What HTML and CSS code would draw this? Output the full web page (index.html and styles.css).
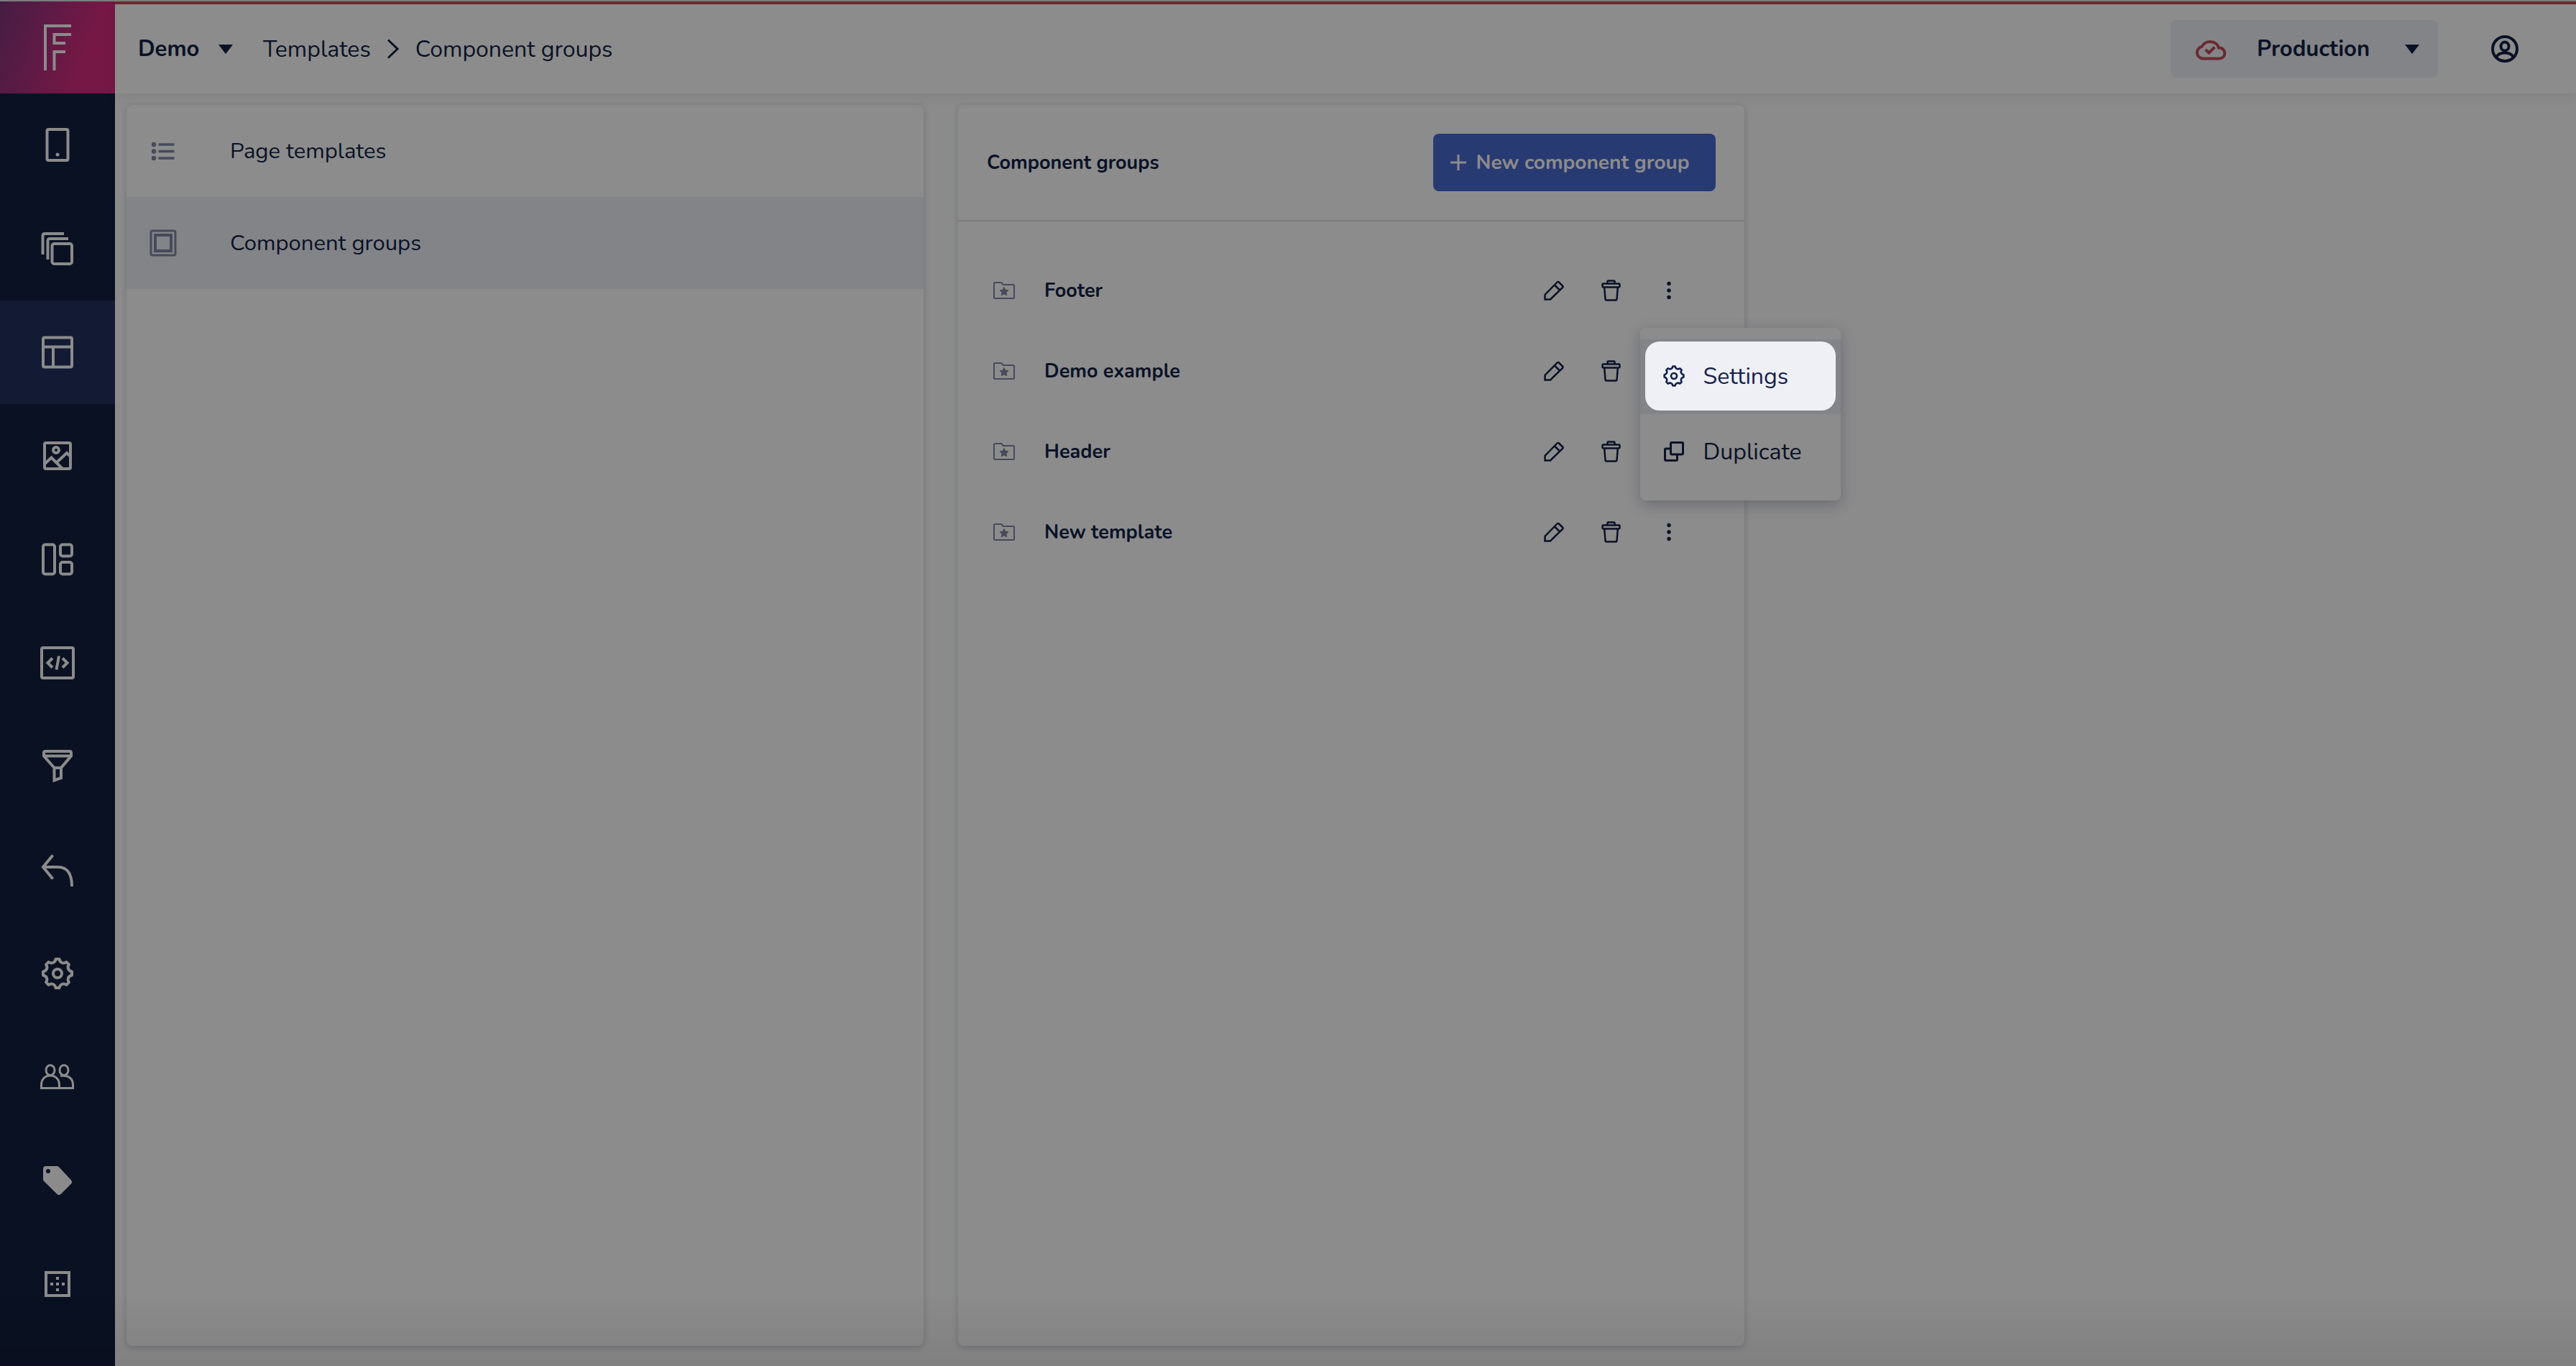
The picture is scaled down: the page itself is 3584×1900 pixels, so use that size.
FILE: index.html
```html
<!DOCTYPE html>
<html lang="en">
<head>
    <meta charset="UTF-8">
    <title>Component groups</title>
    <link rel="stylesheet" href="styles.css">
</head>
<body>
    <!-- Shared icons -->
    <svg class="sprite" aria-hidden="true">
        <symbol id="folder" viewBox="0 0 30 24">
            <path d="M2.5 1h8.5l3 3h13.500q1.500 0 1.500 1.500v16q0 1.500-1.500 1.500h-25q-1.500 0-1.500-1.500v-19q0-1.500 1.500-1.500z" fill="none" stroke="currentColor" stroke-width="2"/>
            <path d="M15 7.500l1.800 3.800 4.200.5-3.100 2.800.8 4.200-3.700-2.100-3.700 2.100.8-4.200-3.100-2.800 4.200-.5z" fill="currentColor"/>
        </symbol>
        <symbol id="pencil" viewBox="0 0 28 28">
            <path d="M1.500 26.500V20L18.500 2.500q1.200-1.200 2.400 0L26 7.500q1.200 1.200 0 2.400L9 26.500zM15 6.500l7 7" fill="none" stroke="currentColor" stroke-width="2.500"/>
        </symbol>
        <symbol id="trash" viewBox="0 0 27 30">
            <path d="M2.700 5.500h21.600q1.200 0 1.200 1.200v2.600q0 1.200-1.200 1.200H2.700q-1.200 0-1.200-1.200V6.700q0-1.200 1.200-1.200zM8.500 5V2.500q0-1 1-1h8q1 0 1 1V5M4.200 11l1.300 16q.1 1.500 1.500 1.500h13q1.400 0 1.500-1.500l1.300-16" fill="none" stroke="currentColor" stroke-width="2.500"/>
        </symbol>
        <symbol id="dots" viewBox="0 0 6 26">
            <g class="solid"><circle cx="3" cy="3.500" r="2.700"/><circle cx="3" cy="13" r="2.700"/><circle cx="3" cy="22.500" r="2.700"/></g>
        </symbol>
        <symbol id="gear" viewBox="-24 -24 48 48">
            <path d="M-2.500-20L2.500-20C3.500-15 8.100-13.100 12.400-15.900L15.900-12.400C13.100-8.100 15-3.500 20-2.500L20 2.500C15 3.500 13.100 8.100 15.900 12.400L12.400 15.900C8.100 13.100 3.500 15 2.500 20L-2.500 20C-3.500 15-8.100 13.100-12.400 15.900L-15.900 12.400C-13.100 8.100-15 3.500-20 2.500L-20-2.500C-15-3.500-13.100-8.100-15.900-12.400L-12.400-15.900C-8.100-13.100-3.500-15-2.500-20Z" fill="none" stroke="currentColor" stroke-width="4" stroke-linejoin="round"/>
            <circle r="6" fill="none" stroke="currentColor" stroke-width="4"/>
        </symbol>
    </svg>

    <aside class="sidebar">
        <a class="logo" href="#" aria-label="Home">
            <svg width="40" height="64" viewBox="0 0 40 64"><path d="M3 64V2h36M39 14H15.500v12H31M31 38H15.500v26"/></svg>
        </a>
        <nav class="nav">
            <a href="#" aria-label="App"><svg viewBox="0 0 48 48"><rect x="9.500" y="2" width="29" height="43" rx="2"/><circle class="solid" cx="24" cy="37" r="2.500"/></svg></a>
            <a href="#" aria-label="Pages"><svg viewBox="0 0 48 48"><rect x="16.500" y="17" width="27.500" height="28" rx="3"/><path d="M10.500 39V13q0-3 3-3H39M3.500 32V6q0-3 3-3H33"/></svg></a>
            <a href="#" class="active" aria-label="Templates"><svg viewBox="0 0 48 48"><rect x="4" y="3.500" width="40" height="41" rx="2"/><path d="M4 16.500h40M18 16.500v28"/></svg></a>
            <a href="#" aria-label="Media"><svg viewBox="0 0 48 48"><rect x="6" y="6" width="36" height="36" rx="2"/><circle cx="22" cy="16" r="4"/><path d="M7 34.500l8.500-8L31 42M23 33l14-13 5 5"/></svg></a>
            <a href="#" aria-label="Dashboard"><svg viewBox="0 0 48 48"><rect x="4" y="3.500" width="16" height="41" rx="3"/><rect x="28" y="3.500" width="16" height="16" rx="3"/><rect x="28" y="28" width="16" height="16.500" rx="3"/></svg></a>
            <a href="#" aria-label="Code"><svg viewBox="0 0 48 48"><rect x="2" y="3" width="44" height="42" rx="2"/><path d="M17 17.500L10.500 24l6.500 6.500M31 17.500l6.500 6.500-6.500 6.500M26 14.500l-3.500 19"/></svg></a>
            <a href="#" aria-label="Filters"><svg viewBox="0 0 48 48"><path d="M5 5a2 2 0 0 1 2-2h34a2 2 0 0 1 2 2v4.500L29 26v14l-9.500 3.500V26L5 9.500zM5 9.500h38M19.500 26H29"/></svg></a>
            <a href="#" aria-label="Redirects"><svg viewBox="0 0 48 48"><path d="M17.500 3.500L4 20l13.500 16.500M4 20h20c14 0 20 9 20 27"/></svg></a>
            <a href="#" aria-label="Settings"><svg><use href="#gear"/></svg></a>
            <a href="#" aria-label="Users"><svg class="thin" viewBox="0 0 48 48"><ellipse cx="14" cy="14.500" rx="6" ry="7"/><path d="M1.500 39.500V35C1.500 27 7 22 14 22s12.500 5 12.500 13v4.500zM26.500 39.500H45.500V35C45.500 26 39 21 28 22.500"/><ellipse cx="33" cy="14.500" rx="6" ry="7"/></svg></a>
            <a href="#" aria-label="Tags"><svg viewBox="0 0 48 48"><path class="solid" fill-rule="evenodd" d="M8 4h15a4 4 0 0 1 3 1.200l16.800 18a4 4 0 0 1 0 5.500L28.800 42.800a4 4 0 0 1-5.600 0L5.200 25A4 4 0 0 1 4 22V8a4 4 0 0 1 4-4zM11 8a3 3 0 1 0 0 6a3 3 0 0 0 0-6z"/></svg></a>
            <a href="#" aria-label="Fields"><svg viewBox="0 0 48 48"><rect x="8" y="8" width="32" height="32"/><path d="M22 24h4M22 16h4M22 32h4M14 24h4M30 24h4"/></svg></a>
        </nav>
    </aside>

    <div class="page">
        <header class="topbar">
            <label class="project">
                <select aria-label="Project"><option>Demo</option></select>
                <svg class="caret" width="20" height="13" viewBox="0 0 20 13"><path d="M0 0h20L10 13z"/></svg>
            </label>
            <div class="breadcrumb">
                <a href="#">Templates</a>
                <svg width="18" height="28" viewBox="0 0 18 28"><path d="M2 1.500L15 14 2 26.500"/></svg>
                <a href="#">Component groups</a>
            </div>
            <label class="environment">
                <svg class="cloud" width="46" height="34" viewBox="0 0 46 34"><path d="M11 30.500a8.500 8.500 0 0 1-1.500-16.800 12.500 11.500 0 0 1 23.500 1.800 7.500 7.500 0 0 1 1.500 15zM14.500 18l4.800 4.500 8-8"/></svg>
                <select aria-label="Environment"><option>Production</option></select>
                <svg class="caret" width="20" height="13" viewBox="0 0 20 13"><path d="M0 0h20L10 13z"/></svg>
            </label>
            <button class="account" type="button" aria-label="Account">
                <svg width="38" height="38" viewBox="0 0 38 38"><circle cx="19" cy="19" r="17"/><ellipse cx="19" cy="15.500" rx="5.500" ry="6"/><path d="M7 30.500c2-4 7-6 12-6s10 2 12 6"/></svg>
            </button>
        </header>

        <main class="content">
            <section class="panel">
                <a class="list-item" href="#">
                    <svg viewBox="0 0 38 38"><g class="solid"><circle cx="6" cy="10" r="3.200"/><circle cx="6" cy="19.500" r="3.200"/><circle cx="6" cy="29" r="3.200"/></g><path stroke-width="3.500" d="M12.500 10h22M12.500 19.500h22M12.500 29h22"/></svg>
                    Page templates
                </a>
                <a class="list-item selected" href="#">
                    <svg viewBox="0 0 38 38"><rect x="2" y="2" width="34" height="34" rx="2" stroke-width="3"/><rect x="8" y="8" width="22" height="22" stroke-width="4"/></svg>
                    Component groups
                </a>
            </section>

            <section class="panel">
                <div class="panel-header">
                    <h1>Component groups</h1>
                    <button class="new-btn" type="button">
                        <svg width="22" height="22" viewBox="0 0 22 22"><path d="M11 0v22M0 11h22"/></svg>
                        New component group
                    </button>
                </div>
                <ul class="groups">
                    <li>
                        <svg class="folder"><use href="#folder"/></svg>
                        <span class="name">Footer</span>
                        <button type="button" aria-label="Edit"><svg width="28" height="28"><use href="#pencil"/></svg></button>
                        <button type="button" aria-label="Delete"><svg width="27" height="30"><use href="#trash"/></svg></button>
                        <div class="more">
                            <button type="button" aria-label="More"><svg width="6" height="26"><use href="#dots"/></svg></button>
                            <div class="menu">
                                <button class="highlight" type="button"><svg width="32" height="32"><use href="#gear"/></svg>Settings</button>
                                <button type="button"><svg width="32" height="32" viewBox="-2 -2 32 32"><path d="M11 1.500h14q1.500 0 1.500 1.500v13.500q0 1.500-1.500 1.500H11q-1.500 0-1.500-1.500V3q0-1.500 1.500-1.500zM9.500 10H3q-1.500 0-1.500 1.500V25q0 1.500 1.500 1.500h14q1.500 0 1.500-1.500v-7"/></svg>Duplicate</button>
                            </div>
                        </div>
                    </li>
                    <li>
                        <svg class="folder"><use href="#folder"/></svg>
                        <span class="name">Demo example</span>
                        <button type="button" aria-label="Edit"><svg width="28" height="28"><use href="#pencil"/></svg></button>
                        <button type="button" aria-label="Delete"><svg width="27" height="30"><use href="#trash"/></svg></button>
                        <button type="button" aria-label="More"><svg width="6" height="26"><use href="#dots"/></svg></button>
                    </li>
                    <li>
                        <svg class="folder"><use href="#folder"/></svg>
                        <span class="name">Header</span>
                        <button type="button" aria-label="Edit"><svg width="28" height="28"><use href="#pencil"/></svg></button>
                        <button type="button" aria-label="Delete"><svg width="27" height="30"><use href="#trash"/></svg></button>
                        <button type="button" aria-label="More"><svg width="6" height="26"><use href="#dots"/></svg></button>
                    </li>
                    <li>
                        <svg class="folder"><use href="#folder"/></svg>
                        <span class="name">New template</span>
                        <button type="button" aria-label="Edit"><svg width="28" height="28"><use href="#pencil"/></svg></button>
                        <button type="button" aria-label="Delete"><svg width="27" height="30"><use href="#trash"/></svg></button>
                        <button type="button" aria-label="More"><svg width="6" height="26"><use href="#dots"/></svg></button>
                    </li>
                </ul>
            </section>
        </main>
    </div>
</body>
</html>
```
FILE: styles.css
```css
* {
    box-sizing: border-box;
}

body {
    margin: 0;
    min-height: 100vh;
    display: flex;
    border-top: 2px solid #7c7c7c;
    background: #8b8b8b;
    color: #0a1226;
    font-family: Nunito, Lato, "Open Sans", sans-serif;
    font-size: 32px;
}

/* darker edge along the bottom of the window */
body::after {
    content: "";
    position: fixed;
    left: 0;
    right: 0;
    bottom: 0;
    height: 100px;
    background: linear-gradient(rgba(0,0,0,0), rgba(0,0,0,0.08));
    pointer-events: none;
}

a {
    color: inherit;
    text-decoration: none;
}

button, select {
    font: inherit;
    color: inherit;
    background: none;
    border: none;
    padding: 0;
    cursor: pointer;
}

select {
    appearance: none;
    font-size: 31px;
    font-weight: bold;
}

svg {
    display: block;
    flex: none;
    fill: none;
    stroke: currentColor;
}

.sprite {
    position: absolute;
    width: 0;
    height: 0;
}

.solid {
    fill: currentColor;
    stroke: none;
}

/* Sidebar */
.sidebar {
    width: 160px;
    flex: none;
    background: #0a1122;
    color: #8b8b8b;
}

.logo {
    height: 128px;
    display: flex;
    align-items: center;
    justify-content: center;
    background: linear-gradient(110deg, #451d44, #761845 72%);
}

.logo svg {
    stroke-width: 4;
}

.nav a {
    height: 144px;
    display: flex;
    align-items: center;
    justify-content: center;
}

.nav a.active {
    background: #121b33;
}

.nav svg {
    width: 48px;
    height: 48px;
    stroke-width: 4;
}

.nav svg.thin {
    stroke-width: 3;
}

/* Top bar */
.page {
    flex: 1;
    min-width: 0;
    display: flex;
    flex-direction: column;
}

.topbar {
    height: 128px;
    display: flex;
    align-items: center;
    padding: 0 80px 0 32px;
    background: #8c8c8c;
    border-top: 4px solid #6a2a30;
    box-shadow: 0 4px 16px rgba(0,0,0,0.08);
}

.caret {
    fill: currentColor;
    stroke: none;
}

.project {
    display: flex;
    align-items: center;
    gap: 26px;
}

.breadcrumb {
    display: flex;
    align-items: center;
    gap: 22px;
    margin-left: 42px;
}

.breadcrumb svg {
    stroke-width: 3;
}

.environment {
    width: 372px;
    height: 80px;
    display: flex;
    align-items: center;
    margin-left: auto;
    padding: 0 26px 0 34px;
    border-radius: 8px;
    background: #838488;
}

.cloud {
    color: #6a2a30;
    stroke-width: 4;
}

.environment select {
    margin-left: 40px;
}

.environment .caret {
    margin-left: auto;
}

.account {
    margin-left: 74px;
}

.account svg {
    stroke-width: 4;
}

/* Panels */
.content {
    flex: 1;
    display: grid;
    grid-template-columns: 71fr 70fr 70fr;
    gap: 48px;
    padding: 16px 16px 28px;
}

.panel {
    border-radius: 8px;
    background: #8c8c8c;
    box-shadow: 0 2px 8px rgba(10,17,34,0.2);
}

.list-item {
    height: 128px;
    display: flex;
    align-items: center;
    gap: 74px;
    padding: 0 32px;
    font-size: 31px;
}

.list-item svg {
    width: 38px;
    height: 38px;
    color: #464a5a;
}

.list-item.selected {
    background: #838488;
}

.panel-header {
    height: 162px;
    display: flex;
    align-items: center;
    justify-content: space-between;
    padding: 0 40px;
    border-bottom: 2px solid #7c7c7c;
}

.panel-header h1 {
    margin: 0;
    font-size: 27px;
}

.new-btn {
    height: 80px;
    display: flex;
    align-items: center;
    gap: 14px;
    padding: 0 36px 0 24px;
    border-radius: 8px;
    background: #283a72;
    color: #8c8c8c;
    font-size: 28px;
    font-weight: bold;
}

.new-btn svg {
    stroke-width: 3;
}

/* Group list */
.groups {
    margin: 0;
    padding: 40px 65px 40px 49px;
    list-style: none;
}

.groups li {
    height: 112px;
    display: flex;
    align-items: center;
}

.folder {
    width: 30px;
    height: 24px;
    margin-right: 41px;
    color: #464a5a;
}

.name {
    flex: 1;
    font-size: 27px;
    font-weight: bold;
}

.groups li > button, .more > button {
    width: 80px;
    height: 112px;
    display: flex;
    align-items: center;
    justify-content: center;
}

.more {
    position: relative;
}

.menu {
    position: absolute;
    top: calc(100% - 4px);
    left: 0;
    z-index: 1;
    width: 279px;
    padding: 16px 0;
    border-radius: 8px;
    background: linear-gradient(#8c8c8c 16px, #838488 16px, #838488 120px, #8c8c8c 120px);
    box-shadow: 0 6px 20px rgba(10,17,34,0.25);
}

.menu button {
    width: 100%;
    height: 104px;
    display: flex;
    align-items: center;
    gap: 25px;
    padding: 0 31px;
}

.menu button svg {
    stroke-width: 3;
}

.menu .highlight {
    width: auto;
    min-width: calc(100% - 14px);
    height: 96px;
    margin: 3px 7px 5px;
    padding: 0 24px;
    border-radius: 20px;
    background: #eff0f6;
    color: #14224a;
}
```
